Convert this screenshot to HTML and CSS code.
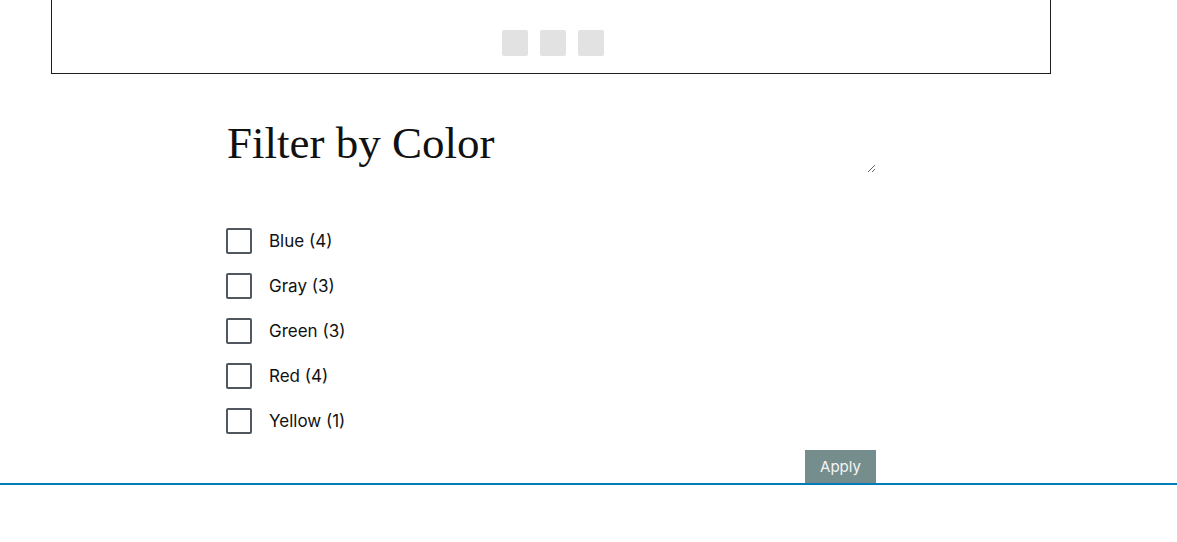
FILE: index.html
```html
<!DOCTYPE html>
<html lang="en">
<head>
<meta charset="utf-8">
<title>Filter by Color</title>
<link rel="stylesheet" href="styles.css">
</head>
<body>
<div class="frame">
  <div class="preview">
    <div class="dots">
      <span class="dot"></span>
      <span class="dot"></span>
      <span class="dot"></span>
    </div>
  </div>
  <div class="widget">
    <div class="title-wrap">
      <h2 class="title">Filter by Color</h2>
      <textarea class="title-input" aria-label="Title"></textarea>
    </div>
    <ul class="options">
      <li class="option"><input type="checkbox" class="box" id="c1"><label for="c1">Blue (4)</label></li>
      <li class="option"><input type="checkbox" class="box" id="c2"><label for="c2">Gray (3)</label></li>
      <li class="option"><input type="checkbox" class="box" id="c3"><label for="c3">Green (3)</label></li>
      <li class="option"><input type="checkbox" class="box" id="c4"><label for="c4">Red (4)</label></li>
      <li class="option"><input type="checkbox" class="box" id="c5"><label for="c5">Yellow (1)</label></li>
    </ul>
    <div class="actions">
      <button class="apply" type="button">Apply</button>
    </div>
  </div>
</div>
<div class="rule"></div>
</body>
</html>
```
FILE: styles.css
```css
html, body {
  margin: 0;
  padding: 0;
  background: #ffffff;
}

body {
  font-family: Inter, "Noto Sans", sans-serif;
  color: #111111;
}

.frame {
  width: 1000px;
  margin-left: 51px;
}

.preview {
  box-sizing: border-box;
  height: 74px;
  border: 1px solid #1e1e1e;
  border-top: 0;
  display: flex;
  justify-content: center;
  padding-left: 4px;
  padding-top: 30px;
}

.dots {
  display: flex;
  gap: 12px;
}

.dot {
  width: 26px;
  height: 26px;
  background: #e2e2e2;
  border-radius: 2px;
}

.widget {
  width: 650px;
  margin: 40px auto 0;
}

.title-wrap {
  display: grid;
}

.title {
  grid-area: 1 / 1;
  margin: 0;
  font-family: "Liberation Serif", "Times New Roman", serif;
  font-weight: 400;
  font-size: 45px;
  line-height: 59px;
  color: #111111;
  padding-left: 1px;
  pointer-events: none;
  z-index: 1;
}

.title-input {
  grid-area: 1 / 1;
  box-sizing: border-box;
  width: 650px;
  height: 59px;
  border: 0;
  outline: 0;
  background: transparent;
  padding: 0;
  margin: 0;
  resize: vertical;
}

.options {
  list-style: none;
  margin: 55px 0 0;
  padding: 0;
  display: flex;
  flex-direction: column;
  gap: 19px;
}

.option {
  display: flex;
  align-items: center;
  gap: 17px;
  height: 26px;
}

.box {
  appearance: none;
  -webkit-appearance: none;
  box-sizing: border-box;
  width: 26px;
  height: 26px;
  margin: 0;
  border: 2px solid #50575e;
  border-radius: 2px;
  background: #ffffff;
}

.option label {
  font-size: 17px;
  line-height: 26px;
  color: #111111;
}

.actions {
  display: flex;
  justify-content: flex-end;
  margin-top: 16px;
}

.apply {
  width: 71px;
  height: 33px;
  border: 0;
  border-radius: 0;
  background: #758d8c;
  color: #f2f4f4;
  font-family: Inter, "Noto Sans", sans-serif;
  font-size: 15px;
  padding: 0;
}

.rule {
  height: 2px;
  background: #007cba;
}
```
